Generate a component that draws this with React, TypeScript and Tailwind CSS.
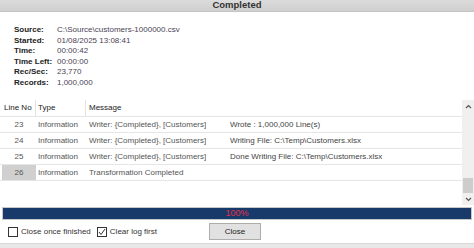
import React from 'react';

const info = [
  ['Source:', 'C:\\Source\\customers-1000000.csv'],
  ['Started:', '01/08/2025 13:08:41'],
  ['Time:', '00:00:42'],
  ['Time Left:', '00:00:00'],
  ['Rec/Sec:', '23,770'],
  ['Records:', '1,000,000'],
];

const rows = [
  { no: 23, type: 'Information', msg: 'Writer: {Completed}, [Customers]', extra: 'Wrote : 1,000,000 Line(s)' },
  { no: 24, type: 'Information', msg: 'Writer: {Completed}, [Customers]', extra: 'Writing File: C:\\Temp\\Customers.xlsx' },
  { no: 25, type: 'Information', msg: 'Writer: {Completed}, [Customers]', extra: 'Done Writing File: C:\\Temp\\Customers.xlsx' },
  { no: 26, type: 'Information', msg: 'Transformation Completed', extra: '', selected: true },
];

function Check({ checked }: { checked?: boolean }) {
  return (
    <span className="w-[10px] h-[10px] border border-[#333] bg-white flex items-center justify-center">
      {checked && (
        <svg width="8" height="8" viewBox="0 0 8 8">
          <path d="M1 4 L3 6.5 L7 1" stroke="#333" strokeWidth="1" fill="none" />
        </svg>
      )}
    </span>
  );
}

export default function App() {
  return (
    <div
      className="w-[474px] h-[248px] bg-white flex flex-col text-[8px] text-[#333] overflow-hidden"
      style={{ fontFamily: '"Liberation Sans", Arial, sans-serif' }}
    >
      <div className="h-[12px] bg-gradient-to-b from-[#dcdcdc] to-[#cfcfcf] border-b border-[#c4c4c4] flex items-center justify-center font-bold text-[9.5px] text-[#333]">
        Completed
      </div>

      <div className="pl-[14px] pt-[13px] h-[88px] flex flex-col">
        {info.map(([k, v]) => (
          <div key={k} className="flex h-[10.5px] items-center">
            <span className="w-[43px] font-bold text-[#222]">{k}</span>
            <span className="text-[#4a3f55]">{v}</span>
          </div>
        ))}
      </div>

      <div className="flex h-[105px]">
        <div className="flex-1 flex flex-col">
          <div className="flex h-[16px] items-center text-[#222]">
            <div className="w-[36px] pl-[4px] border-r border-[#e3e3e3] h-full flex items-center">Line No</div>
            <div className="w-[50px] pl-[2px] border-r border-[#e3e3e3] h-full flex items-center">Type</div>
            <div className="pl-[3px]">Message</div>
          </div>
          {rows.map((r) => (
            <div key={r.no} className="flex h-[16px] items-center border-t border-[#e6e6e6] text-[#555]">
              <div className={`w-[34px] ml-[2px] h-full flex items-center justify-center ${r.selected ? 'bg-[#d0d0d0]' : ''}`}>{r.no}</div>
              <div className="w-[50px] pl-[2px]">{r.type}</div>
              <div className="w-[144px] pl-[3px]">{r.msg}</div>
              <div className="text-[#444]">{r.extra}</div>
            </div>
          ))}
          <div className="border-t border-[#e6e6e6]" />
        </div>
        <div className="w-[12px] bg-[#f0f0f0] flex flex-col items-center">
          <div className="h-[12px] flex items-center justify-center">
            <svg width="7" height="5" viewBox="0 0 7 5"><path d="M1 4 L3.5 1.5 L6 4" stroke="#555" strokeWidth="1.2" fill="none" /></svg>
          </div>
          <div className="flex-1" />
          <div className="w-[10px] h-[15px] bg-[#cdcdcd]" />
          <div className="h-[12px] flex items-center justify-center">
            <svg width="7" height="5" viewBox="0 0 7 5"><path d="M1 1 L3.5 3.5 L6 1" stroke="#555" strokeWidth="1.2" fill="none" /></svg>
          </div>
        </div>
      </div>

      <div className="mx-[2px] mt-[2px] h-[13px] bg-[#173a6a] border border-[#c8c8c8] flex items-center justify-center text-[#e0304a] text-[9px]">
        100%
      </div>

      <div className="flex items-center h-[23px] pl-[8px]">
        <label className="flex items-center gap-[3px] text-[#333]">
          <Check />
          <span>Close once finished</span>
        </label>
        <label className="flex items-center gap-[3px] ml-[6px] text-[#333]">
          <Check checked />
          <span>Clear log first</span>
        </label>
        <button className="ml-[52px] w-[52px] h-[17px] bg-[#e1e1e1] border border-[#adadad] text-[#222]">Close</button>
      </div>
      <div className="flex-1 bg-[#e8e8e8] border-t border-[#d8d8d8]" />
    </div>
  );
}
